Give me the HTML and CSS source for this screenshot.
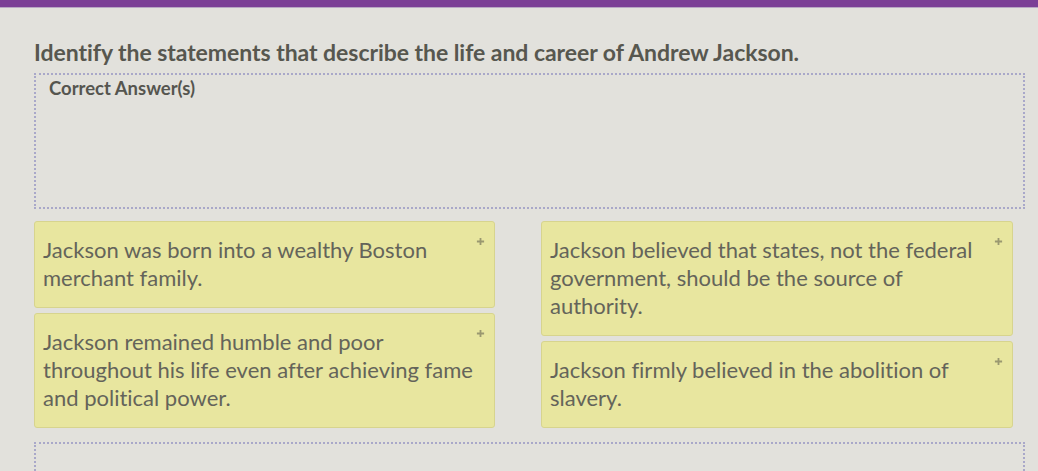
FILE: index.html
```html
<!DOCTYPE html>
<html lang="en">
<head>
<meta charset="utf-8">
<title>Andrew Jackson – drag and drop</title>
<link rel="stylesheet" href="styles.css">
</head>
<body>
  <div class="topbar"></div>
  <main class="page">
    <h1 class="question">Identify the statements that describe the life and career of Andrew Jackson.</h1>

    <section class="drop-zone answers">
      <div class="zone-label">Correct Answer(s)</div>
    </section>

    <div class="choices">
      <div class="column">
        <div class="card">
          <p class="card-text">Jackson was born into a wealthy Boston merchant family.</p>
          <svg class="grip" viewBox="0 0 10 10" aria-hidden="true"><path d="M5 1v8M1 5h8"/></svg>
        </div>
        <div class="card">
          <p class="card-text">Jackson remained humble and poor throughout his life even after achieving fame and political power.</p>
          <svg class="grip" viewBox="0 0 10 10" aria-hidden="true"><path d="M5 1v8M1 5h8"/></svg>
        </div>
      </div>
      <div class="column">
        <div class="card">
          <p class="card-text">Jackson believed that states, not the federal government, should be the source of authority.</p>
          <svg class="grip" viewBox="0 0 10 10" aria-hidden="true"><path d="M5 1v8M1 5h8"/></svg>
        </div>
        <div class="card">
          <p class="card-text">Jackson firmly believed in the abolition of slavery.</p>
          <svg class="grip" viewBox="0 0 10 10" aria-hidden="true"><path d="M5 1v8M1 5h8"/></svg>
        </div>
      </div>
    </div>

    <section class="drop-zone remaining"></section>
  </main>
</body>
</html>
```
FILE: styles.css
```css
html, body {
  margin: 0;
  padding: 0;
}

body {
  background: #e2e1dc;
  font-family: Lato, "Open Sans", "Liberation Sans", sans-serif;
  font-variant-ligatures: none;
  color: #5e5e58;
  overflow: hidden;
  height: 471px;
}

.topbar {
  height: 7px;
  background: #7c3f96;
  border-bottom: 1px solid #b9a6c4;
}

.page {
  padding: 0 13px 0 34px;
}

.question {
  margin: 30px 0 0 0;
  font-size: 23px;
  line-height: 29px;
  font-weight: 700;
  color: #57574f;
  letter-spacing: -0.05px;
}

.drop-zone {
  border: 2px dotted #a9a8c9;
  box-sizing: border-box;
}

.answers {
  margin-top: 6px;
  height: 136px;
  padding: 1px 13px;
}

.zone-label {
  font-size: 18.5px;
  font-weight: 700;
  color: #55554f;
  line-height: 24px;
}

.choices {
  display: grid;
  grid-template-columns: 461px 472px;
  column-gap: 46px;
  margin-top: 12px;
}

.column {
  display: flex;
  flex-direction: column;
  gap: 5px;
}

.card {
  position: relative;
  background: #e8e69f;
  border: 1px solid #d7d48e;
  border-radius: 3px;
  padding: 14px 12px 15px 8px;
}

.card-text {
  margin: 0;
  font-size: 22px;
  line-height: 28px;
  color: #64645a;
}

/* drag handle in the card's top-right corner */
.grip {
  position: absolute;
  top: 15px;
  right: 9px;
  width: 9px;
  height: 9px;
  stroke: #9a9870;
  stroke-width: 2;
  fill: none;
}

.remaining {
  margin-top: 14px;
  height: 60px;
}
```
